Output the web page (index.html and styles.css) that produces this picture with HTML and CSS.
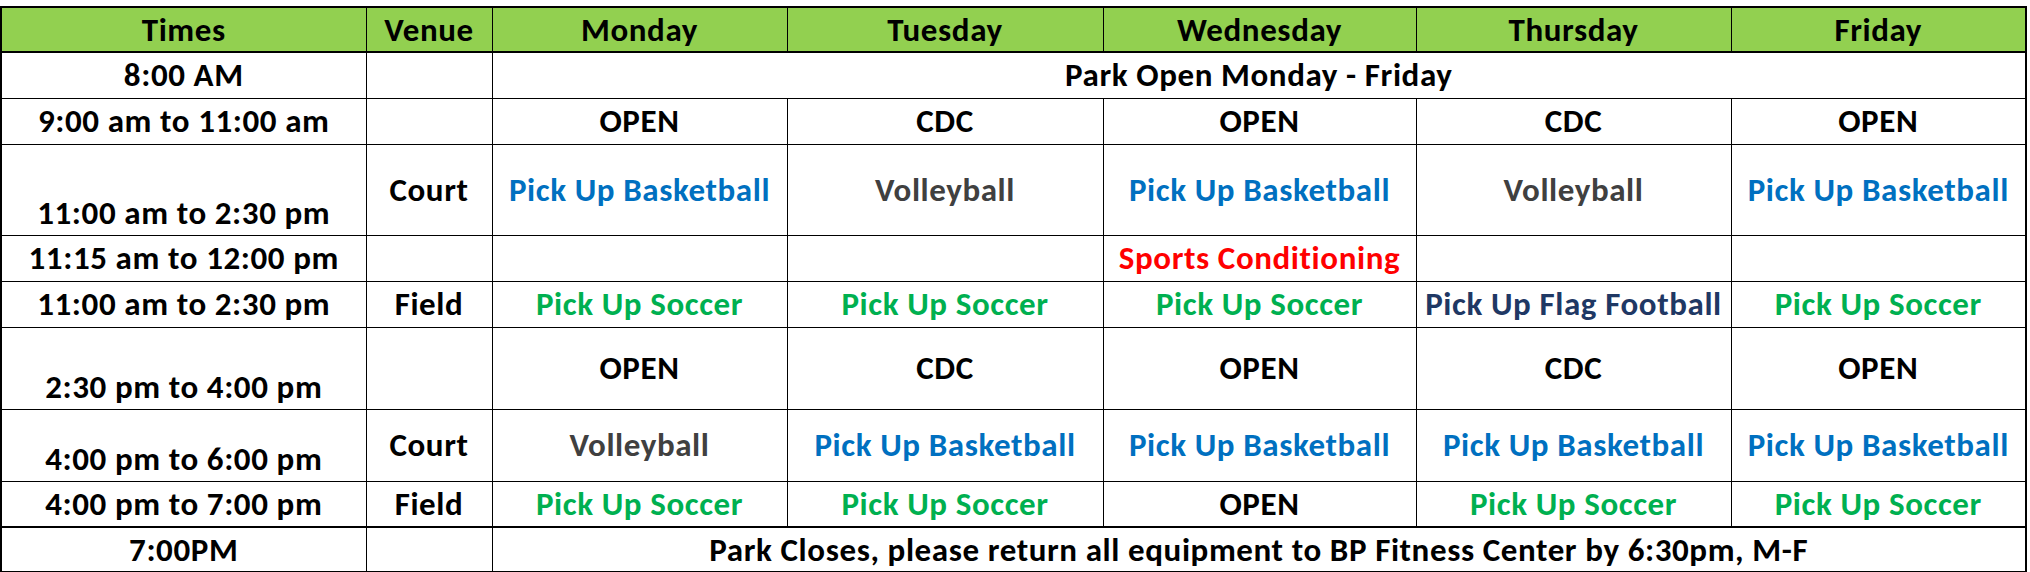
FILE: index.html
```html
<!DOCTYPE html>
<html lang="en">
<head>
<meta charset="utf-8">
<title>Park Schedule</title>
<link rel="stylesheet" href="styles.css">
</head>
<body>
<div class="page">
<table class="schedule">
  <colgroup>
    <col class="c-time"><col class="c-venue"><col class="c-mon"><col class="c-tue"><col class="c-wed"><col class="c-thu"><col class="c-fri">
  </colgroup>
  <thead>
    <tr class="r-head">
      <th>Times</th><th>Venue</th><th>Monday</th><th>Tuesday</th><th>Wednesday</th><th>Thursday</th><th>Friday</th>
    </tr>
  </thead>
  <tbody>
    <tr class="r-std">
      <td>8:00 AM</td><td></td><td colspan="5">Park Open Monday - Friday</td>
    </tr>
    <tr class="r-std">
      <td>9:00 am to 11:00 am</td><td></td><td>OPEN</td><td>CDC</td><td>OPEN</td><td>CDC</td><td>OPEN</td>
    </tr>
    <tr class="r-court1">
      <td class="time-bottom">11:00 am to 2:30 pm</td><td>Court</td>
      <td class="blue">Pick Up Basketball</td><td class="gray">Volleyball</td><td class="blue">Pick Up Basketball</td><td class="gray">Volleyball</td><td class="blue">Pick Up Basketball</td>
    </tr>
    <tr class="r-std2">
      <td>11:15 am to 12:00 pm</td><td></td><td></td><td></td><td class="red">Sports Conditioning</td><td></td><td></td>
    </tr>
    <tr class="r-std2">
      <td>11:00 am to 2:30 pm</td><td>Field</td>
      <td class="green">Pick Up Soccer</td><td class="green">Pick Up Soccer</td><td class="green">Pick Up Soccer</td><td class="navy">Pick Up Flag Football</td><td class="green">Pick Up Soccer</td>
    </tr>
    <tr class="r-mid">
      <td class="time-bottom">2:30 pm to 4:00 pm</td><td></td><td>OPEN</td><td>CDC</td><td>OPEN</td><td>CDC</td><td>OPEN</td>
    </tr>
    <tr class="r-court2">
      <td class="time-bottom">4:00 pm to 6:00 pm</td><td>Court</td>
      <td class="gray">Volleyball</td><td class="blue">Pick Up Basketball</td><td class="blue">Pick Up Basketball</td><td class="blue">Pick Up Basketball</td><td class="blue">Pick Up Basketball</td>
    </tr>
    <tr class="r-std">
      <td>4:00 pm to 7:00 pm</td><td>Field</td>
      <td class="green">Pick Up Soccer</td><td class="green">Pick Up Soccer</td><td>OPEN</td><td class="green">Pick Up Soccer</td><td class="green">Pick Up Soccer</td>
    </tr>
    <tr class="r-last">
      <td>7:00PM</td><td></td><td colspan="5">Park Closes, please return all equipment to BP Fitness Center by 6:30pm, M-F</td>
    </tr>
  </tbody>
</table>
</div>
</body>
</html>
```
FILE: styles.css
```css
html, body {
  margin: 0;
  padding: 0;
  background: #ffffff;
}

.page {
  padding-top: 6px;
}

.schedule {
  border-collapse: collapse;
  table-layout: fixed;
  width: 2025px;
  font-family: "Carlito", "Lato", "Liberation Sans", sans-serif;
  font-weight: 700;
  font-size: 33px;
  letter-spacing: 0.6px;
  line-height: 38px;
  color: #000000;
  border: 2px solid #000000;
}

.c-time { width: 365px; }
.c-venue { width: 126px; }
.c-mon { width: 295px; }
.c-tue { width: 316px; }
.c-wed { width: 313px; }
.c-thu { width: 315px; }
.c-fri { width: 295px; }

.schedule th,
.schedule td {
  border: 1px solid #000000;
  padding: 0;
  text-align: center;
  vertical-align: middle;
  white-space: nowrap;
  overflow: hidden;
}

.schedule th {
  background: #92d050;
  font-weight: 700;
  border-top: 2px solid #000000;
  border-bottom: 2px solid #000000;
}

.r-head { height: 45px; }
.r-std { height: 46px; }
.r-std2 { height: 46px; }
.r-court1 { height: 91px; }
.r-mid { height: 82px; }
.r-court2 { height: 72px; }
.r-last { height: 45px; }

.r-last td {
  border-top: 2px solid #000000;
  border-bottom: 2px solid #000000;
}

.schedule td.time-bottom {
  vertical-align: bottom;
  padding-bottom: 3px;
}

.blue { color: #0070c0; }
.green { color: #00b050; }
.red { color: #ff0000; }
.navy { color: #1f3864; }
.gray { color: #404040; }
```
